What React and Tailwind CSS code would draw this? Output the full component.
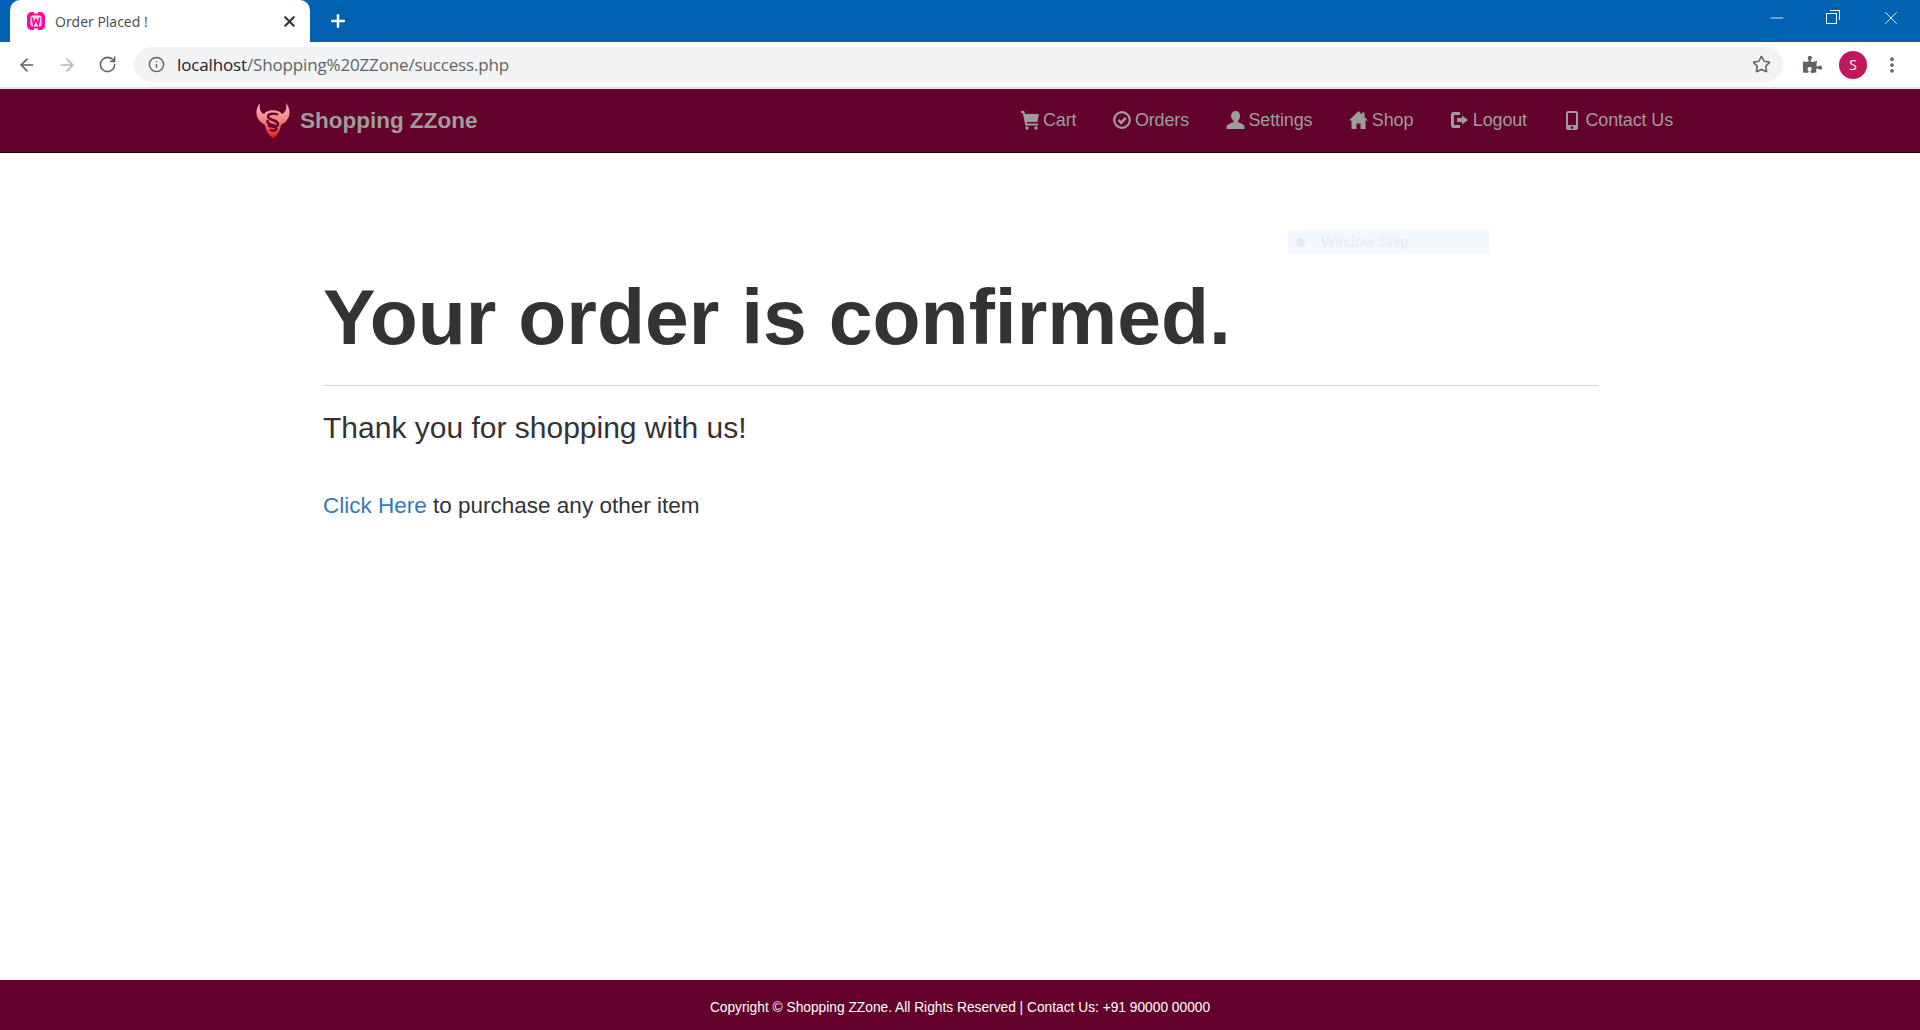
import { ArrowLeft, ArrowRight, RotateCw, Info, Star, Plus, X, Minus, MoreVertical } from "lucide-react";
import { FaPuzzlePiece } from "react-icons/fa";

const sans = "font-['Liberation_Sans',Arial,sans-serif]";

function CartIcon() {
  return (
    <svg width="18" height="19" viewBox="0 0 18 19" fill="currentColor">
      <path d="M0 0h3.200l.8 3h14l-1.600 8H5.800l.3 1.500H17v2H4.300L1.800 2H0z" />
      <circle cx="6" cy="17" r="1.700" />
      <circle cx="15" cy="17" r="1.700" />
    </svg>
  );
}

function CheckCircleIcon() {
  return (
    <svg width="18" height="18" viewBox="0 0 18 18" fill="none" stroke="currentColor">
      <circle cx="9" cy="9" r="7.800" strokeWidth="2.200" />
      <path d="M5.500 9l2.700 2.800 4.500-5" strokeWidth="2.600" />
    </svg>
  );
}

function UserIcon() {
  return (
    <svg width="19" height="18" viewBox="0 0 18 18" fill="currentColor">
      <path d="M9 0c3 0 4.500 2 4.500 5 0 2-1 4-2 5v1c2 1 6 2 6.500 4.500V18H0v-2.500C.5 13 5 12 7 11v-1c-1-1-2.500-3-2.500-5 0-3 1.500-5 4.500-5z" />
    </svg>
  );
}

function HomeIcon() {
  return (
    <svg width="19" height="18" viewBox="0 0 19 18" fill="currentColor">
      <path d="M9.500 0 13 3.500V1.500h2.500V6L19 9.500h-2.500V18H11.500v-5.500h-4V18H2.500V9.500H0z" />
    </svg>
  );
}

function LogoutIcon() {
  return (
    <svg width="19" height="18" viewBox="0 0 19 18" fill="currentColor">
      <path d="M3 1h7v3H4v10h6v3H3a2.500 2.500 0 0 1-2-2.500v-11A2.500 2.500 0 0 1 3 1z" />
      <path d="M12 4.500 18 9l-6 4.500V11H7V7h5z" />
    </svg>
  );
}

function PhoneIcon() {
  return (
    <svg width="14" height="19" viewBox="0 0 14 19" fill="currentColor">
      <path fillRule="evenodd" d="M3 0h8a2 2 0 0 1 2 2v15a2 2 0 0 1-2 2H3a2 2 0 0 1-2-2V2a2 2 0 0 1 2-2zm0 2v12h8V2zm4 13.200a1.400 1.400 0 1 0 0 2.800 1.400 1.400 0 0 0 0-2.800z" />
    </svg>
  );
}

function ServerFavicon() {
  return (
    <svg width="20" height="20" viewBox="0 0 20 20">
      <path
        d="M6 1h2v1.500h4V1h2c3 0 5 2 5 5v8c0 3-2 5-5 5h-2v-1.500H8V19H6c-3 0-5-2-5-5V6c0-3 2-5 5-5z"
        fill="#f0109a"
      />
      <rect x="4.500" y="4.500" width="11" height="11" rx="2.500" fill="#fde3f3" />
      <path d="M6.200 6.500l1.500 7 2.300-5 2.300 5 1.500-7" fill="none" stroke="#f0109a" strokeWidth="1.800" />
    </svg>
  );
}

function BrandLogo() {
  return (
    <svg width="36" height="36" viewBox="0 0 36 36">
      <defs>
        <linearGradient id="brand" x1="0" y1="0" x2="0" y2="1">
          <stop offset="0" stopColor="#f5c4b8" />
          <stop offset="0.55" stopColor="#f07a78" />
          <stop offset="1" stopColor="#ee1420" />
        </linearGradient>
      </defs>
      <path
        d="M5 0C1 5 0 12 4 17c2 3 5 4 6 5 1 6 4 11 8 13 4-2 7-7 8-13 1-1 4-2 6-5 4-5 3-12-1-17 1 5 0 9-4 11-3-5-15-5-18 0C5 9 4 5 5 0z"
        fill="url(#brand)"
      />
      <path
        d="M23 12c-2-2-10-2-10 1.500 0 4 10 3 10 7.500 0 3.500-7 3.500-10 1M13 17c-2 3.500 3 4.500 6 5.500 3 1 3 4.500 0 5-2 .5-3 0-4-1"
        fill="none"
        stroke="#66002c"
        strokeWidth="2.400"
      />
    </svg>
  );
}

function NavItem({ icon, label, className }) {
  return (
    <a className={`flex items-center gap-[4px] ${className || ""}`}>
      {icon}
      <span>{label}</span>
    </a>
  );
}

function BrowserChrome() {
  return (
    <div className="font-['Open_Sans',sans-serif]">
      <div className="flex h-[42px] items-end bg-[#0062b1] pl-[10px] text-white">
        <div className="flex h-[42px] w-[300px] items-center rounded-t-[10px] bg-white pl-[16px] pr-[12px] text-[#45494d]">
          <ServerFavicon />
          <span className="ml-[9px] flex-1 text-[14px]">Order Placed !</span>
          <X size={17} strokeWidth={3} className="text-[#333]" />
        </div>
        <div className="ml-[18px] flex h-[42px] items-center">
          <Plus size={20} strokeWidth={3} />
        </div>
        <div className="ml-auto flex h-[42px] items-center pb-[6px] pr-[18px]">
          <Minus size={20} strokeWidth={1} />
          <div className="relative ml-[39px] h-[11px] w-[11px] border border-white">
            <div className="absolute -right-[4px] -top-[4px] h-[10px] w-[10px] border-r border-t border-white" />
          </div>
          <X size={22} strokeWidth={1} className="ml-[43px]" />
        </div>
      </div>
      <div className="flex h-[47px] items-center border-b-2 border-[#e4dfe1] bg-white pl-[17px] pr-[18px]">
        <ArrowLeft size={20} className="text-[#5f6368]" strokeWidth={2} />
        <ArrowRight size={20} className="ml-[20px] text-[#b4b6b9]" strokeWidth={2} />
        <RotateCw size={19} className="ml-[21px] text-[#5f6368]" strokeWidth={2} />
        <div className="ml-[17px] flex h-[35px] flex-1 items-center rounded-full bg-[#f1f3f4] pl-[14px] pr-[12px]">
          <Info size={17} className="text-[#5f6368]" />
          <span className="ml-[12px] flex-1 text-[17px] tracking-[-0.15px] text-[#5f6368]">
            <span className="text-[#202124]">localhost</span>/Shopping%20ZZone/success.php
          </span>
          <Star size={19} className="text-[#5f6368]" strokeWidth={2} />
        </div>
        <FaPuzzlePiece size={19} className="ml-[20px] text-[#5f6368]" />
        <div className="ml-[17px] flex h-[28px] w-[28px] items-center justify-center rounded-full bg-[#c2185b] text-[14px] text-white">
          S
        </div>
        <MoreVertical size={20} className="ml-[15px] text-[#5f6368]" strokeWidth={2.500} />
      </div>
    </div>
  );
}

export default function App() {
  return (
    <div className={`relative flex h-screen flex-col overflow-hidden bg-white text-[#333] ${sans}`}>
      <BrowserChrome />

      <nav className="flex h-[64px] items-center border-b border-[#1a0010] bg-[#63002c] pl-[255px] pr-[247px] text-[#9d9d9d]">
        <BrandLogo />
        <span className="ml-[9px] text-[22.5px] font-bold">Shopping ZZone</span>
        <div className="ml-auto flex items-center gap-[36.500px] pb-[1px] text-[18px] tracking-[-0.15px]">
          <NavItem icon={<CartIcon />} label="Cart" />
          <NavItem icon={<CheckCircleIcon />} label="Orders" />
          <NavItem icon={<UserIcon />} label="Settings" />
          <NavItem icon={<HomeIcon />} label="Shop" className="gap-[3px]" />
          <NavItem icon={<LogoutIcon />} label="Logout" />
          <NavItem icon={<PhoneIcon />} label="Contact Us" className="ml-[2px] gap-[6px]" />
        </div>
      </nav>

      <main className="ml-[323px] mr-[322px] flex-1 pt-[120px]">
        <h1 className="text-[78.7px] font-bold leading-[88px]">Your order is confirmed.</h1>
        <hr className="mt-[24px] border-[#d8d8d8]" />
        <p className="mt-[21px] text-[30px] leading-[42px]">Thank you for shopping with us!</p>
        <p className="mt-[40px] text-[22.5px] leading-[33px]">
          <a className="text-[#337ab7]">Click Here</a> to purchase any other item
        </p>
      </main>

      <div className="absolute left-[1288px] top-[230px] flex h-[24px] w-[202px] items-center bg-[#f3f9ff] pl-[8px] text-[15px] text-[#e3ebf3]">
        <div className="h-[9px] w-[9px] rounded-full bg-[#dfeaf5]" />
        <span className="ml-[16px]">Window Snip</span>
      </div>

      <footer className="flex h-[50px] items-center justify-center bg-[#63002c] pt-[6px] text-[13.75px] text-white">
        Copyright © Shopping ZZone. All Rights Reserved | Contact Us: +91 90000 00000
      </footer>
    </div>
  );
}
